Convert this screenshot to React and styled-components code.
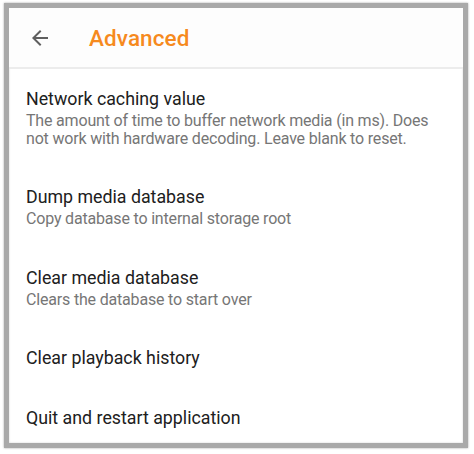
import styled, { createGlobalStyle } from "styled-components";

const GlobalStyle = createGlobalStyle`
  html, body {
    margin: 0;
    padding: 0;
    background: #ffffff;
  }
  body {
    font-family: Roboto, "Liberation Sans", Arial, sans-serif;
    -webkit-font-smoothing: antialiased;
  }
`;

const Page = styled.div`
  width: 474px;
  height: 454px;
  padding: 3px 0 0 4px;
  box-sizing: border-box;
`;

const Card = styled.div`
  width: 454px;
  height: 435px;
  border: 5px solid #a9a9a9;
  box-shadow: 0 0 2px rgba(0, 0, 0, 0.35), inset 0 0 2px rgba(0, 0, 0, 0.2);
  background: #ffffff;
  overflow: hidden;
  display: flex;
  flex-direction: column;
`;

const Toolbar = styled.div`
  height: 59px;
  flex: none;
  display: flex;
  align-items: center;
  padding-left: 19px;
  gap: 37px;
  background: #fdfdfd;
  border-bottom: 2px solid #ececec;
`;

const BackButton = styled.button`
  border: none;
  background: none;
  padding: 0;
  width: 24px;
  height: 24px;
  display: flex;
  color: #5f5f5f;
  cursor: pointer;
`;

const Title = styled.h1`
  margin: 0;
  font-size: 22.5px;
  font-weight: 500;
  color: #f68a1e;
  letter-spacing: 0.1px;
`;

const List = styled.div`
  display: flex;
  flex-direction: column;
`;

const Item = styled.div`
  padding: 19.6px 6px 19.9px 17px;
`;

const ItemTitle = styled.div`
  font-size: 17.8px;
  line-height: 20px;
  color: #202020;
`;

const ItemSummary = styled.div`
  margin-top: 3px;
  font-size: 16px;
  letter-spacing: -0.18px;
  line-height: 18px;
  color: #767676;
`;

const SummaryLine = styled.span`
  display: block;
  white-space: nowrap;
`;

const prefs = [
  {
    title: "Network caching value",
    summary: [
      "The amount of time to buffer network media (in ms). Does",
      "not work with hardware decoding. Leave blank to reset.",
    ],
  },
  { title: "Dump media database", summary: ["Copy database to internal storage root"] },
  { title: "Clear media database", summary: ["Clears the database to start over"] },
  { title: "Clear playback history" },
  { title: "Quit and restart application" },
];

function BackArrow() {
  return (
    <svg width="24" height="24" viewBox="0 0 24 24" fill="currentColor">
      <path d="M20 11H7.83l5.59-5.59L12 4l-8 8 8 8 1.41-1.41L7.83 13H20v-2z" />
    </svg>
  );
}

export default function App() {
  return (
    <Page>
      <GlobalStyle />
      <Card>
        <Toolbar>
          <BackButton aria-label="Back">
            <BackArrow />
          </BackButton>
          <Title>Advanced</Title>
        </Toolbar>
        <List>
          {prefs.map((p) => (
            <Item key={p.title}>
              <ItemTitle>{p.title}</ItemTitle>
              {p.summary && (
                <ItemSummary>
                  {p.summary.map((line) => (
                    <SummaryLine key={line}>{line}</SummaryLine>
                  ))}
                </ItemSummary>
              )}
            </Item>
          ))}
        </List>
      </Card>
    </Page>
  );
}
